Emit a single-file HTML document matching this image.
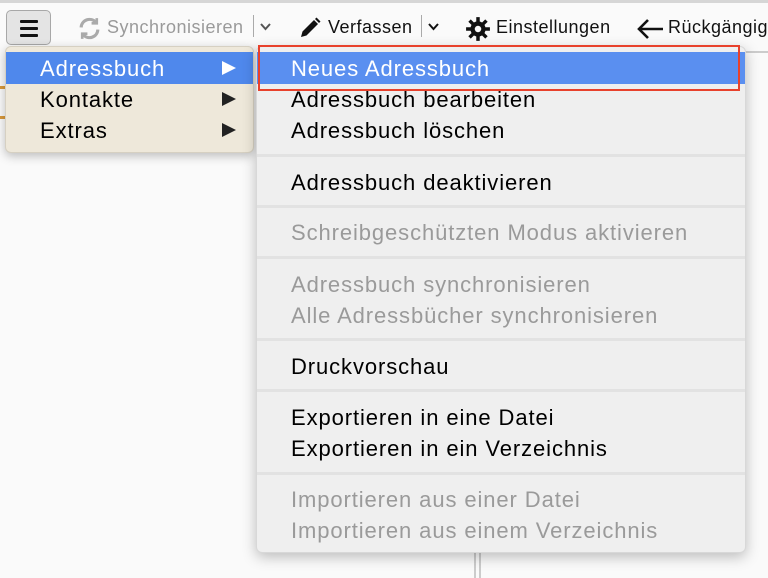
<!DOCTYPE html>
<html><head><meta charset="utf-8"><style>
*{margin:0;padding:0;box-sizing:border-box}
body{width:768px;height:578px;overflow:hidden;background:#fafafa;font-family:"Liberation Sans",sans-serif;position:relative}
.top{position:absolute;left:0;top:0;width:768px;height:3px;background:#d6d6d6}
.tb{position:absolute;top:17px;font-size:18px;letter-spacing:.5px;color:#111;white-space:nowrap}
.burger{position:absolute;left:6px;top:10px;width:45px;height:35px;border:1px solid #a8a8a8;border-radius:5px;background:#e4e4e4}
.burger i{position:absolute;left:13px;width:18px;height:3px;background:#111;border-radius:1px}
.m1{position:absolute;left:5px;top:46px;width:249px;height:107px;background:#eee8da;border-radius:6px;box-shadow:0 3px 10px rgba(0,0,0,.25);border:1px solid #d6d0c2}
.m2{position:absolute;left:256px;top:46px;width:490px;height:507px;background:#efefef;border-radius:6px;box-shadow:0 4px 14px rgba(0,0,0,.25);border:1px solid #d8d8d8}
.it{position:absolute;font-size:22px;letter-spacing:.9px;white-space:nowrap;line-height:24px;margin-top:1px}
.hl{position:absolute;height:32px;background:#5089ee}
.sep{position:absolute;left:0;width:488px;height:3px;background:#e2e2e2}
.dis{color:#9a9a9a}
.arr{position:absolute;left:216px;width:0;height:0;border-left:14px solid #222;border-top:7px solid transparent;border-bottom:7px solid transparent}
</style></head><body>
<div class="top"></div>
<div style="position:absolute;left:474px;top:540px;width:2px;height:38px;background:#ccc"></div>
<div style="position:absolute;left:479px;top:540px;width:2px;height:38px;background:#ccc"></div>
<div style="position:absolute;left:0;top:86px;width:6px;height:3px;background:#d99a3c"></div>
<div style="position:absolute;left:0;top:116px;width:6px;height:3px;background:#d99a3c"></div>
<div style="position:absolute;left:490px;top:51px;width:278px;height:2px;background:#ccc"></div>

<div class="burger"><i style="top:9px"></i><i style="top:16px"></i><i style="top:23px"></i></div>
<svg style="position:absolute;left:77px;top:16px" width="25" height="25" viewBox="0 0 24 24" fill="none" stroke="#aaa" stroke-width="3"><path d="M4 11a8 8 0 0 1 14-5"/><path d="M20 13a8 8 0 0 1-14 5"/><path d="M19 2v5h-5M5 22v-5h5" stroke-width="2.5"/></svg>
<div class="tb" style="left:107px;color:#9a9a9a">Synchronisieren</div>
<div style="position:absolute;left:253px;top:15px;width:1px;height:22px;background:#aaa"></div>
<svg style="position:absolute;left:260px;top:23px" width="11" height="8" viewBox="0 0 11 8" fill="none" stroke="#555" stroke-width="2"><path d="M1 1l4.5 5L10 1"/></svg>
<svg style="position:absolute;left:298px;top:16px" width="24" height="24" viewBox="0 0 24 24"><path d="M3 21l1.5-5.5L16 4l4 4L8.5 19.5z" fill="#111"/><path d="M17 3l1.5-1.5 4 4L21 7z" fill="#111"/></svg>
<div class="tb" style="left:328px">Verfassen</div>
<div style="position:absolute;left:421px;top:15px;width:1px;height:22px;background:#aaa"></div>
<svg style="position:absolute;left:428px;top:23px" width="11" height="8" viewBox="0 0 11 8" fill="none" stroke="#111" stroke-width="2"><path d="M1 1l4.5 5L10 1"/></svg>
<svg style="position:absolute;left:465px;top:16px" width="26" height="26" viewBox="0 0 24 24"><g stroke="#111" stroke-width="3.2"><path d="M12 1v22M1 12h22M4.2 4.2l15.6 15.6M19.8 4.2L4.2 19.8"/></g><circle cx="12" cy="12" r="7" fill="#111"/><circle cx="12" cy="12" r="3" fill="#fafafa"/></svg>
<div class="tb" style="left:496px">Einstellungen</div>
<svg style="position:absolute;left:636px;top:17px" width="28" height="24" viewBox="0 0 28 24" fill="none" stroke="#111" stroke-width="2.6"><path d="M27 12H3M12 3l-9 9 9 9"/></svg>
<div class="tb" style="left:668px">Rückgängig</div>

<div class="m1">
<div class="hl" style="left:0;top:5px;width:247px;background:#4f88ec"></div>
<div class="it" style="left:34px;top:9px;color:#fff">Adressbuch</div>
<div class="arr" style="top:14px;border-left-color:#fff"></div>
<div class="it" style="left:34px;top:40px">Kontakte</div>
<div class="arr" style="top:45px"></div>
<div class="it" style="left:34px;top:71px">Extras</div>
<div class="arr" style="top:76px"></div>
</div>

<div class="m2">
<div class="hl" style="left:0;top:5px;width:488px;background:#5a8ff0"></div>
<div class="it" style="left:34px;top:9px;color:#fff">Neues Adressbuch</div>
<div class="it" style="left:34px;top:40px">Adressbuch bearbeiten</div>
<div class="it" style="left:34px;top:71px">Adressbuch löschen</div>
<div class="sep" style="top:107px"></div>
<div class="it" style="left:34px;top:123px">Adressbuch deaktivieren</div>
<div class="sep" style="top:158px"></div>
<div class="it dis" style="left:34px;top:173px">Schreibgeschützten Modus aktivieren</div>
<div class="sep" style="top:209px"></div>
<div class="it dis" style="left:34px;top:225px">Adressbuch synchronisieren</div>
<div class="it dis" style="left:34px;top:256px">Alle Adressbücher synchronisieren</div>
<div class="sep" style="top:291px"></div>
<div class="it" style="left:34px;top:307px">Druckvorschau</div>
<div class="sep" style="top:342px"></div>
<div class="it" style="left:34px;top:358px">Exportieren in eine Datei</div>
<div class="it" style="left:34px;top:389px">Exportieren in ein Verzeichnis</div>
<div class="sep" style="top:425px"></div>
<div class="it dis" style="left:34px;top:440px">Importieren aus einer Datei</div>
<div class="it dis" style="left:34px;top:471px">Importieren aus einem Verzeichnis</div>
</div>
<div style="position:absolute;left:258px;top:45px;width:482px;height:46px;border:2.5px solid #e8412c"></div>
</body></html>
